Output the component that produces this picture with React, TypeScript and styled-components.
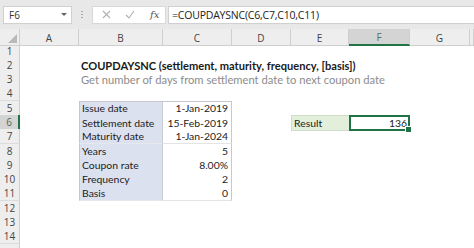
import React from "react";
import styled, { createGlobalStyle, css } from "styled-components";

const GlobalStyle = createGlobalStyle`
  html, body { margin: 0; padding: 0; background: #fff; }
  body { width: 474px; height: 248px; overflow: hidden; font-family: "Lato", "Open Sans", sans-serif; }
`;

const COLS = ["20px", "59px", "84px", "69px", "59px", "58px", "61px", "60px", "1fr"];
const TEMPLATE = COLS.join(" ");
const ROW_H = 14.3;
const GREEN = "#217346";

const FormulaBar = styled.div`
  height: 29px;
  background: #e8e8e8;
  display: flex;
  align-items: center;
  padding-left: 3px;
  box-sizing: border-box;
`;

const NameBox = styled.div`
  width: 69px;
  height: 18px;
  background: #fff;
  border: 1px solid #d0d0d0;
  box-sizing: border-box;
  display: flex;
  align-items: center;
  justify-content: space-between;
  padding: 0 4px 0 5px;
  font: 10px "Open Sans", sans-serif;
  color: #333;
`;

const Caret = styled.span`
  width: 0;
  height: 0;
  border-left: 3px solid transparent;
  border-right: 3px solid transparent;
  border-top: 3px solid #666;
`;

const Dots = styled.div`
  width: 2px;
  height: 10px;
  margin: 0 9px 0 9px;
  background: radial-gradient(circle, #a8a8a8 45%, transparent 55%) 0 0 / 2px 3px repeat-y;
`;

const FuncBox = styled.div`
  width: 74px;
  height: 18px;
  background: #fff;
  border: 1px solid #d8d8d8;
  box-sizing: border-box;
  display: flex;
  align-items: center;
  padding-left: 9px;
  gap: 14px;
`;

const Fx = styled.span`
  font: italic 10px "DejaVu Serif", serif;
  color: #555;
  margin-left: 1px;
`;

const FormulaInput = styled.div`
  flex: 1;
  height: 18px;
  margin-left: 2px;
  background: #fff;
  border: 1px solid #d0d0d0;
  border-right: none;
  box-sizing: border-box;
  display: flex;
  align-items: center;
  padding-left: 3px;
  font: 10.5px "Open Sans", sans-serif;
  color: #222;
  letter-spacing: -0.2px;
`;

const Row = styled.div<{ $h: number }>`
  display: grid;
  grid-template-columns: ${TEMPLATE};
  height: ${(p) => p.$h}px;
`;

const Corner = styled.div`
  background: #eeeeee;
  border-right: 1px solid #cfcfcf;
  border-bottom: 1px solid #cfcfcf;
  box-sizing: border-box;
  position: relative;
  &::after {
    content: "";
    position: absolute;
    right: 2px;
    bottom: 2px;
    border-left: 9px solid transparent;
    border-bottom: 9px solid #b9b9b9;
  }
`;

const ColHead = styled.div<{ $sel?: boolean }>`
  background: ${(p) => (p.$sel ? "#d4d4d4" : "#eeeeee")};
  border-right: 1px solid #cfcfcf;
  border-bottom: ${(p) => (p.$sel ? `2px solid ${GREEN}` : "1px solid #cfcfcf")};
  box-sizing: border-box;
  display: flex;
  align-items: center;
  justify-content: center;
  font: 10px "Open Sans", sans-serif;
  color: ${(p) => (p.$sel ? "#5a6e5f" : "#444")};
  padding-top: 1px;
`;

const RowHead = styled.div<{ $sel?: boolean }>`
  background: ${(p) => (p.$sel ? "#d4d4d4" : "#eeeeee")};
  border-right: ${(p) => (p.$sel ? `2px solid ${GREEN}` : "1px solid #cfcfcf")};
  border-bottom: 1px solid #dcdcdc;
  box-sizing: border-box;
  display: flex;
  align-items: center;
  justify-content: center;
  font: 10px "Open Sans", sans-serif;
  color: ${(p) => (p.$sel ? "#4e6b57" : "#444")};
`;

type CellKind = "plain" | "label" | "value" | "result" | "active";

const Cell = styled.div<{ $kind?: CellKind; $first?: boolean; $right?: boolean }>`
  position: relative;
  box-sizing: border-box;
  display: flex;
  align-items: flex-end;
  justify-content: ${(p) => (p.$right ? "flex-end" : "flex-start")};
  padding: 0 3px 1px 2px;
  font-size: 10.4px;
  line-height: 12px;
  color: #222;
  white-space: nowrap;
  overflow: visible;
  ${(p) =>
    p.$kind === "label" &&
    css`
      background: #dce1f0;
      border-left: 1px solid #c4c7d0;
      border-right: 1px solid #c9ccd4;
      border-bottom: 1px solid #e6e8ee;
      ${p.$first && "border-top: 1px solid #c4c7d0;"}
    `}
  ${(p) =>
    p.$kind === "value" &&
    css`
      background: #fff;
      border-right: 1px solid #c9c9c9;
      border-bottom: 1px solid #e4e4e4;
      ${p.$first && "border-top: 1px solid #c4c7d0;"}
    `}
  ${(p) =>
    p.$kind === "result" &&
    css`
      background: #e2efda;
      border: 1px solid #d2dccb;
      border-right: none;
    `}
  ${(p) =>
    p.$kind === "active" &&
    css`
      background: #fff;
      border: 2px solid ${GREEN};
      padding-right: 1px;
      padding-bottom: 0;
    `}
`;

const Cells = styled.div`
  display: contents;
`;

const Title = styled.span<{ $sub?: boolean }>`
  font-weight: ${(p) => (p.$sub ? 400 : 700)};
  font-size: ${(p) => (p.$sub ? "11.2px" : "11.1px")};
  color: ${(p) => (p.$sub ? "#8c8c8c" : "#1a1a1a")};
`;

const Handle = styled.span`
  position: absolute;
  right: -4px;
  bottom: -4px;
  width: 5px;
  height: 5px;
  background: ${GREEN};
  border: 1px solid #fff;
`;

const LETTERS = ["A", "B", "C", "D", "E", "F", "G", ""];

const TABLE: [string, string][] = [
  ["Issue date", "1-Jan-2019"],
  ["Settlement date", "15-Feb-2019"],
  ["Maturity date", "1-Jan-2024"],
  ["Years", "5"],
  ["Coupon rate", "8.00%"],
  ["Frequency", "2"],
  ["Basis", "0"],
];

function rowCells(r: number): React.ReactNode[] {
  const cells: React.ReactNode[] = [];
  for (let c = 0; c < 8; c++) {
    const key = `${r}-${c}`;
    if (c === 1 && r === 2) {
      cells.push(
        <Cell key={key}>
          <Title>COUPDAYSNC (settlement, maturity, frequency, [basis])</Title>
        </Cell>
      );
    } else if (c === 1 && r === 3) {
      cells.push(
        <Cell key={key}>
          <Title $sub>Get number of days from settlement date to next coupon date</Title>
        </Cell>
      );
    } else if (r >= 5 && r <= 11 && c === 1) {
      cells.push(
        <Cell key={key} $kind="label" $first={r === 5}>
          {TABLE[r - 5][0]}
        </Cell>
      );
    } else if (r >= 5 && r <= 11 && c === 2) {
      cells.push(
        <Cell key={key} $kind="value" $first={r === 5} $right>
          {TABLE[r - 5][1]}
        </Cell>
      );
    } else if (r === 6 && c === 4) {
      cells.push(
        <Cell key={key} $kind="result">
          Result
        </Cell>
      );
    } else if (r === 6 && c === 5) {
      cells.push(
        <Cell key={key} $kind="active" $right>
          136
          <Handle />
        </Cell>
      );
    } else {
      cells.push(<Cell key={key} />);
    }
  }
  return cells;
}

export default function App() {
  const rows = Array.from({ length: 15 }, (_, i) => i + 1);
  return (
    <>
      <GlobalStyle />
      <FormulaBar>
        <NameBox>
          <span>F6</span>
          <Caret />
        </NameBox>
        <Dots />
        <FuncBox>
          <svg width="9" height="9" viewBox="0 0 9 9">
            <path d="M1 1 L8 8 M8 1 L1 8" stroke="#b0b0b0" strokeWidth="1.1" fill="none" />
          </svg>
          <svg width="10" height="9" viewBox="0 0 10 9">
            <path d="M1 5 L4 8 L9 1" stroke="#b0b0b0" strokeWidth="1.1" fill="none" />
          </svg>
          <Fx>fx</Fx>
        </FuncBox>
        <FormulaInput>=COUPDAYSNC(C6,C7,C10,C11)</FormulaInput>
      </FormulaBar>
      <Row $h={14.5}>
        <Corner />
        {LETTERS.map((l, i) => (
          <ColHead key={i} $sel={l === "F"}>
            {l}
          </ColHead>
        ))}
      </Row>
      {rows.map((r) => (
        <Row key={r} $h={ROW_H}>
          <RowHead $sel={r === 6}>{r < 15 ? r : ""}</RowHead>
          <Cells>{rowCells(r)}</Cells>
        </Row>
      ))}
    </>
  );
}
